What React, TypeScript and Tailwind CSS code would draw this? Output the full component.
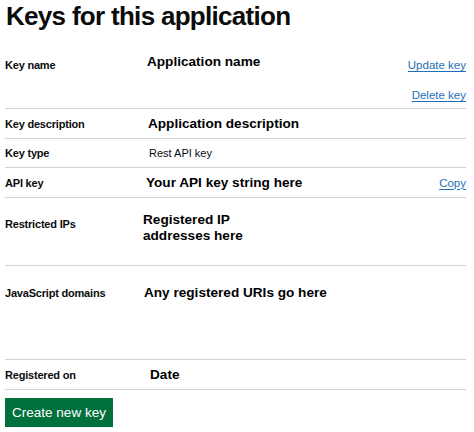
import React from "react";

type RowProps = {
  label: string;
  labelTop?: string;
  value?: React.ReactNode;
  valueClass?: string;
  action?: React.ReactNode;
  rowClass: string;
};

function Row({ label, labelTop, value, valueClass, action, rowClass }: RowProps) {
  return (
    <div className={`flex border-b border-[#d3d3d3] ${rowClass}`}>
      <div className={`w-[142px] shrink-0 text-[11px] font-bold leading-[16px] tracking-[-0.2px] ${labelTop ?? ""}`}>
        {label}
      </div>
      <div className={`flex-1 leading-[16px] ${valueClass ?? ""}`}>{value}</div>
      {action}
    </div>
  );
}

const valueText = "block font-['Liberation_Sans',Arial,sans-serif] text-[13.6px] font-bold leading-[16px] text-black";
const linkText = "block text-[11.5px] leading-[16px] text-[#1d70b8] underline underline-offset-2 decoration-1";

export default function App() {
  return (
    <div className="min-h-screen bg-white pl-[5px] pr-[8px] font-['Liberation_Sans',Arial,sans-serif] text-[#0b0c0c]">
      <h1 className="h-[48px] pt-[1px] pl-[1px] text-[26px] font-bold leading-[30px] tracking-[-0.7px]">
        Keys for this application
      </h1>

      <div className="flex flex-col">
        {/* Key name */}
        <Row
          rowClass="h-[61px] items-start"
          label="Key name"
          labelTop="pt-[9px]"
          valueClass="pt-[6px]"
          value={<span className={valueText}>Application name</span>}
          action={
            <div className="flex flex-col items-end gap-[14px] pt-[9px]">
              <a href="#" className={linkText}>Update key</a>
              <a href="#" className={linkText}>Delete key</a>
            </div>
          }
        />

        {/* Key description */}
        <Row
          rowClass="h-[30px] items-center"
          label="Key description"
          valueClass="pl-[1px]"
          value={<span className={valueText}>Application description</span>}
        />

        {/* Key type */}
        <Row
          rowClass="h-[29px] items-center"
          label="Key type"
          valueClass="pl-[2px]"
          value={<span className="block text-[11px] leading-[16px]">Rest API key</span>}
        />

        {/* API key */}
        <Row
          rowClass="h-[30px] items-center"
          label="API key"
          valueClass="-ml-[1px]"
          value={<span className={valueText}>Your API key string here</span>}
          action={<a href="#" className={linkText}>Copy</a>}
        />

        {/* Restricted IPs */}
        <Row
          rowClass="h-[68px] items-start"
          label="Restricted IPs"
          labelTop="pt-[18px]"
          valueClass="-ml-[4px] pt-[14px]"
          value={
            <p className={valueText}>
              Registered IP
              <br />
              addresses here
            </p>
          }
        />

        {/* JavaScript domains */}
        <Row
          rowClass="h-[94px] items-start"
          label="JavaScript domains"
          labelTop="pt-[19px]"
          valueClass="-ml-[3px] pt-[19px]"
          value={<span className={valueText}>Any registered URIs go here</span>}
        />

        {/* Registered on */}
        <Row
          rowClass="h-[30px] items-center"
          label="Registered on"
          valueClass="pl-[3px]"
          value={<span className={valueText}>Date</span>}
        />
      </div>

      <button className="mt-[8px] h-[29px] w-[108px] bg-[#00703c] text-[13.5px] leading-[29px] text-white">
        Create new key
      </button>
    </div>
  );
}
